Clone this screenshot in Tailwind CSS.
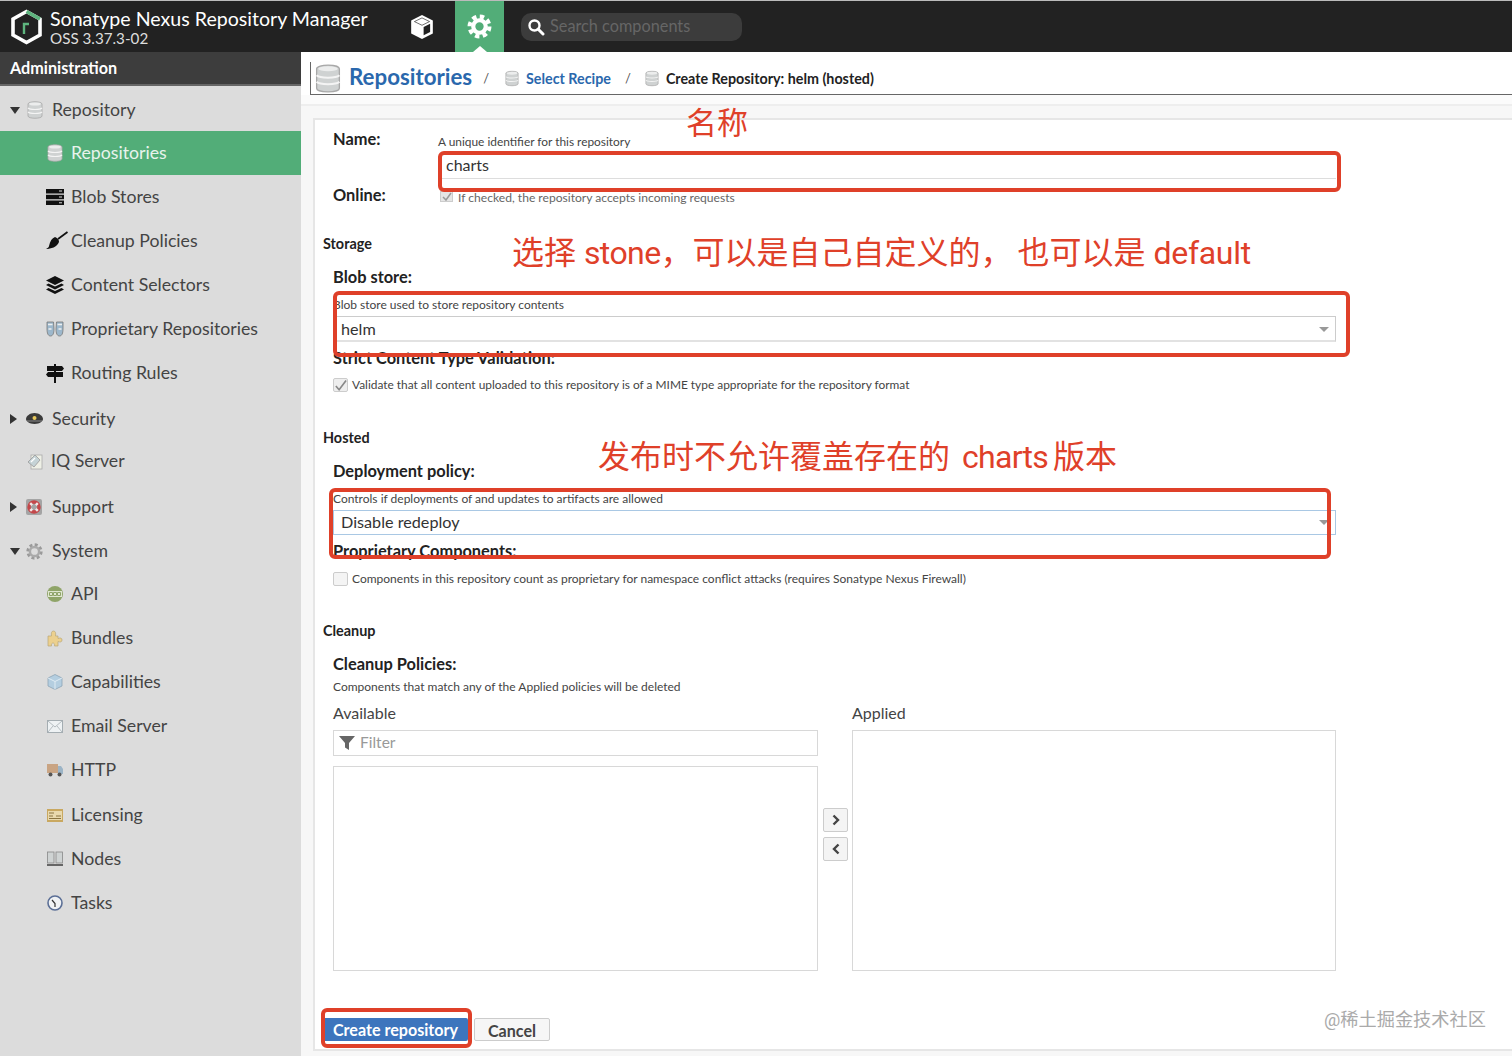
<!DOCTYPE html>
<html lang="en">
<head>
  <meta charset="UTF-8" />
  <title>Create Repository - Nexus Repository Manager</title>
  <script src="https://cdn.jsdelivr.net/npm/@tailwindcss/browser@4"></script>
</head>
<body class="w-[1512px] h-[1056px] overflow-hidden bg-white font-['Lato',sans-serif] text-[#333]">
  <svg class="hidden">
    <symbol id="db" viewBox="0 0 16 18">
      <path d="M1 3c0-3 14-3 14 0v12c0 3-14 3-14 0z" fill="#cfd2d2" stroke="#a8a8a8" stroke-width=".8"/>
      <path d="M1 7c2 2 12 2 14 0M1 11c2 2 12 2 14 0" fill="none" stroke="#f4f4f4" stroke-width="1.2"/>
      <ellipse cx="8" cy="3" rx="6" ry="1.6" fill="#eceded"/>
    </symbol>
  </svg>

  <!-- top bar -->
  <header class="h-[52px] bg-[#222] border-t border-[#bbb] flex items-center relative">
    <svg class="ml-[10px] w-[33px] h-[36px]" viewBox="0 0 33 36">
      <path d="M16.500 2.500 L30 10 V26 L16.500 33.500 L3 26 V10Z" fill="none" stroke="#fff" stroke-width="3.600"/>
      <path d="M16.500 2.500 L30 10" stroke="#5eb57e" stroke-width="3.600"/>
      <path d="M14 25v-10h5" fill="none" stroke="#5eb57e" stroke-width="2.400"/>
    </svg>
    <div class="ml-[7px] w-[362px] text-white">
      <div class="text-[19.600px] leading-[21px] h-[21px] whitespace-nowrap">Sonatype Nexus Repository Manager</div>
      <div class="mt-[1px] text-[15.200px] leading-[16px] text-[#ddd]">OSS 3.37.3-02</div>
    </div>
    <svg class="ml-[-3px] w-[26px] h-[26px]" viewBox="0 0 24 24">
      <path d="M12 1 L22 6 V18 L12 23 L2 18 V6Z" fill="#fff"/>
      <path d="M13.500 12 L19.500 9 V16.500 L13.500 19.500Z" fill="#222"/>
      <path d="M5 7 L12 3.600 L19 7 L12 10.400Z" fill="#fff" stroke="#222" stroke-width=".6"/>
    </svg>
    <div class="ml-[20px] w-[49px] h-[51px] bg-[#52ad78] relative flex items-center justify-center">
      <svg class="w-[25px] h-[25px]" viewBox="0 0 24 24">
        <circle cx="12" cy="12" r="9.500" fill="none" stroke="#fff" stroke-width="4" stroke-dasharray="4.200 3.260"/>
        <circle cx="12" cy="12" r="6" fill="none" stroke="#fff" stroke-width="4"/>
      </svg>
      <div class="absolute bottom-0 left-[18px] w-0 h-0 border-x-[7px] border-x-transparent border-b-[6px] border-b-white"></div>
    </div>
    <div class="ml-[17px] w-[221px] h-[28px] rounded-[10px] bg-[#3c3c3c] flex items-center pl-[6px]">
      <svg class="w-[18px] h-[18px]" viewBox="0 0 18 18">
        <circle cx="7.500" cy="7.500" r="5" fill="none" stroke="#fff" stroke-width="2.400"/>
        <path d="M11 11l5 5" stroke="#fff" stroke-width="3" stroke-linecap="round"/>
      </svg>
      <span class="ml-[5px] text-[16.300px] text-[#666]">Search components</span>
    </div>
  </header>

  <div class="flex h-[1004px]">
    <!-- sidebar -->
    <aside class="w-[301px] shrink-0 bg-[#dcdcdc] text-[17.700px] text-[#444]">
      <div class="h-[34px] bg-[#3d3d3d] border-b-2 border-[#666] pl-[10px] leading-[32px] text-[16.200px] font-bold text-white">Administration</div>

      <div class="h-[45px] pt-[3px] flex items-center pl-[10px]">
        <span class="w-0 h-0 border-x-[5px] border-x-transparent border-t-[7px] border-t-[#333]"></span>
        <svg class="ml-[7px] w-[16px] h-[18px]"><use href="#db"/></svg>
        <span class="ml-[9px]">Repository</span>
      </div>
      <div class="h-[44px] flex items-center pl-[47px] bg-[#52ad78] text-[#e8f3ec]">
        <svg class="w-[16px] h-[18px]"><use href="#db"/></svg>
        <span class="ml-[8px]">Repositories</span>
      </div>
      <div class="h-[44px] flex items-center pl-[46px]">
        <svg class="w-[18px] h-[18px]" viewBox="0 0 18 18"><path d="M0 1h18v4.400H0zM0 6.800h18v4.400H0zM0 12.600h18V17H0z" fill="#111"/><path d="M13 3h3M13 9h3M13 14.800h3" stroke="#ddd"/></svg>
        <span class="ml-[7px]">Blob Stores</span>
      </div>
      <div class="h-[44px] flex items-center pl-[46px]">
        <svg class="w-[22px] h-[20px]" viewBox="0 0 22 20"><path d="M21.500 1 12 8" stroke="#111" stroke-width="1.800"/><path d="M9 6c3 1 4 3 4 5-2 5-8 7-13 7 2-1 3-2 3-3 1-5 3-8 6-9z" fill="#111"/></svg>
        <span class="ml-[3px]">Cleanup Policies</span>
      </div>
      <div class="h-[44px] flex items-center pl-[46px]">
        <svg class="w-[18px] h-[18px]" viewBox="0 0 18 18"><path d="M9 0 18 4.500 9 9 0 4.500Z" fill="#111"/><path d="M2.500 7.500 9 10.600 15.500 7.500 18 9 9 13.500 0 9ZM2.500 12 9 15.100 15.500 12 18 13.500 9 18 0 13.500Z" fill="#111"/></svg>
        <span class="ml-[7px]">Content Selectors</span>
      </div>
      <div class="h-[44px] flex items-center pl-[46px]">
        <svg class="w-[18px] h-[18px]" viewBox="0 0 18 18"><path d="M1 2h6.500l.5 7c0 4-1 7-3.500 7S1 13 1 9z" fill="#9db8cc" stroke="#777" stroke-width=".8"/><path d="M10.500 2H17v7c0 4-1 7-3.500 7S10 13 10 9z" fill="#9db8cc" stroke="#777" stroke-width=".8"/><path d="M2 4.500h4.500M11.500 4.500H16M2.500 9h3M12.500 9h3" stroke="#eee" stroke-width="1.600"/></svg>
        <span class="ml-[7px]">Proprietary Repositories</span>
      </div>
      <div class="h-[44px] flex items-center pl-[46px]">
        <svg class="w-[18px] h-[19px]" viewBox="0 0 18 19"><path d="M8 0h2v19H8z" fill="#111"/><path d="M1 2h15l2 2.500-2 2.500H1zM17 8H2l-2 2.500L2 13h15z" fill="#111"/></svg>
        <span class="ml-[7px]">Routing Rules</span>
      </div>

      <div class="h-[44px] mt-[2px] flex items-center pl-[10px]">
        <span class="w-0 h-0 border-y-[5px] border-y-transparent border-l-[7px] border-l-[#333]"></span>
        <svg class="ml-[9px] w-[17px] h-[14px]" viewBox="0 0 17 14"><path d="M0 7c0-3 4-6 8.500-6S17 4 17 7c0 2-3 5-8.500 5S0 9 0 7z" fill="#3a3a3a"/><path d="M1 9h15" stroke="#888" stroke-width="1"/><circle cx="8.500" cy="6" r="2" fill="#e8c95c"/></svg>
        <span class="ml-[9px]">Security</span>
      </div>
      <div class="h-[40px] flex items-center pl-[27px]">
        <svg class="w-[16px] h-[17px]" viewBox="0 0 16 17"><rect x="4" y="2" width="11" height="14" fill="#eef0e6" stroke="#aaa" stroke-width=".8"/><path d="M1 9 8 2l5 5-6 7z" fill="#c5d3d6" stroke="#999" stroke-width=".8"/><path d="M4 9l4-4" stroke="#fff" stroke-width="1.200"/></svg>
        <span class="ml-[8px]">IQ Server</span>
      </div>
      <div class="h-[44px] mt-[4px] flex items-center pl-[10px]">
        <span class="w-0 h-0 border-y-[5px] border-y-transparent border-l-[7px] border-l-[#333]"></span>
        <svg class="ml-[9px] w-[16px] h-[16px]" viewBox="0 0 16 16"><rect width="16" height="16" rx="2" fill="#a4a4a4"/><circle cx="8" cy="8" r="5" fill="none" stroke="#c4474a" stroke-width="3.400"/><path d="M4.200 4.200l2 2M11.800 4.200l-2 2M4.200 11.800l2-2M11.800 11.800l-2-2" stroke="#f2e8e8" stroke-width="2.400"/></svg>
        <span class="ml-[10px]">Support</span>
      </div>
      <div class="h-[44px] flex items-center pl-[10px]">
        <span class="w-0 h-0 border-x-[5px] border-x-transparent border-t-[7px] border-t-[#333]"></span>
        <svg class="ml-[6px] w-[17px] h-[17px]" viewBox="0 0 24 24"><circle cx="12" cy="12" r="9.500" fill="none" stroke="#9a9a9a" stroke-width="4" stroke-dasharray="4.200 3.260"/><circle cx="12" cy="12" r="6.500" fill="none" stroke="#aaa" stroke-width="3.500"/></svg>
        <span class="ml-[9px]">System</span>
      </div>
      <div class="h-[42px] flex items-center pl-[47px]">
        <svg class="w-[16px] h-[16px]" viewBox="0 0 16 16"><circle cx="8" cy="8" r="8" fill="#8fa468"/><rect x="1" y="5" width="14" height="6" fill="#dfe6d0"/><path d="M2.500 6.500h3v3h-3zM6.500 6.500h3v3h-3zM10.500 6.500h3v3h-3z" fill="none" stroke="#8fa468"/></svg>
        <span class="ml-[8px]">API</span>
      </div>
      <div class="h-[44px] mt-[1px] flex items-center pl-[47px]">
        <svg class="w-[16px] h-[17px]" viewBox="0 0 16 17"><path d="M1 6h3.500C4 3 4.500 1 6.500 1S9 3 8.500 6H11v2.500c2.500-1 4-.5 4 1.500s-1.500 2.500-4 1.500V16H7.500c.5-2-.5-3-1.500-3s-2 1-1.500 3H1z" fill="#ecd08e" stroke="#b9a878" stroke-width=".7"/></svg>
        <span class="ml-[8px]">Bundles</span>
      </div>
      <div class="h-[44px] flex items-center pl-[47px]">
        <svg class="w-[16px] h-[16px]" viewBox="0 0 16 16"><path d="M8 .5 15 4v8l-7 3.500L1 12V4Z" fill="#b4cee0" stroke="#8ea4b6" stroke-width=".8"/><path d="M1 4l7 3.500L15 4M8 7.500v8" fill="none" stroke="#e4eef5" stroke-width=".9"/></svg>
        <span class="ml-[8px]">Capabilities</span>
      </div>
      <div class="h-[44px] flex items-center pl-[47px]">
        <svg class="w-[16px] h-[13px]" viewBox="0 0 16 13"><rect x=".5" y=".5" width="15" height="12" fill="#eef2f4" stroke="#a4adb2"/><path d="M1 1l7 6 7-6M1 12l5-6M15 12l-5-6" fill="none" stroke="#a4adb2" stroke-width=".8"/></svg>
        <span class="ml-[8px]">Email Server</span>
      </div>
      <div class="h-[44px] flex items-center pl-[47px]">
        <svg class="w-[16px] h-[14px]" viewBox="0 0 16 14"><rect y="1" width="11" height="9" fill="#c9a483"/><path d="M11 3h3l2 3v5h-5z" fill="#9cb4c6"/><circle cx="3.500" cy="11.500" r="2" fill="#555"/><circle cx="12.500" cy="11.500" r="2" fill="#555"/></svg>
        <span class="ml-[8px]">HTTP</span>
      </div>
      <div class="h-[44px] mt-[1px] flex items-center pl-[47px]">
        <svg class="w-[16px] h-[13px]" viewBox="0 0 16 13"><rect width="16" height="13" fill="#c9a860"/><rect x="1" y="2" width="14" height="9" fill="#e9d9ad"/><path d="M2 4h5M2 7h4M9 7h5M2 9.500h12" stroke="#8a7440"/></svg>
        <span class="ml-[8px]">Licensing</span>
      </div>
      <div class="h-[44px] flex items-center pl-[47px]">
        <svg class="w-[16px] h-[16px]" viewBox="0 0 16 16"><rect x=".5" y="1" width="6.500" height="11" fill="#cfd3d3" stroke="#888" stroke-width=".8"/><rect x="9" y="1" width="6.500" height="11" fill="#cfd3d3" stroke="#888" stroke-width=".8"/><path d="M0 14h16" stroke="#666" stroke-width="2"/></svg>
        <span class="ml-[8px]">Nodes</span>
      </div>
      <div class="h-[44px] flex items-center pl-[47px]">
        <svg class="w-[16px] h-[16px]" viewBox="0 0 16 16"><circle cx="8" cy="8" r="7" fill="#f0f2f4" stroke="#5b6f96" stroke-width="1.600"/><path d="M5 5l3 3.500V12" fill="none" stroke="#333" stroke-width="1.200"/></svg>
        <span class="ml-[8px]">Tasks</span>
      </div>
    </aside>

    <!-- main -->
    <main class="flex-1 relative bg-[#f7f7f7]">
      <div class="h-[43px] bg-white pl-[9px] pt-[10px]">
        <div class="h-[33px] border-l border-b border-[#666] pl-[4px] flex items-center">
          <svg class="w-[26px] h-[31px]"><use href="#db"/></svg>
          <span class="ml-[8px] text-[22.300px] font-bold text-[#2a68ad] leading-[30px] mb-[2px]">Repositories</span>
          <span class="ml-[11px] mt-[1px] text-[13px] text-[#555]">/</span>
          <svg class="ml-[16px] w-[14px] h-[17px]"><use href="#db"/></svg>
          <span class="ml-[7px] mt-[2px] text-[14.300px] font-bold text-[#2a68ad]">Select Recipe</span>
          <span class="ml-[14px] mt-[1px] text-[13px] text-[#555]">/</span>
          <svg class="ml-[14px] w-[14px] h-[17px]"><use href="#db"/></svg>
          <span class="ml-[7px] mt-[2px] text-[14.300px] font-bold text-[#222]">Create Repository: helm (hosted)</span>
        </div>
      </div>
      <div class="h-[9px] bg-[#fbfbfb]"></div>
      <div class="h-[2px] bg-[#eee]"></div>
      <div class="h-[12px]"></div>

      <!-- form panel -->
      <div class="ml-[12px] h-[933px] bg-white border-l-2 border-t-2 border-b-2 border-[#e6e6e6] pt-[11px] pl-[18px] text-[12px] text-[#444]">
        <div class="h-[20px] flex items-start">
          <label class="w-[105px] text-[16.400px] leading-[16px] font-bold text-[#222]">Name:</label>
          <span class="leading-[21px] text-[11.900px]">A unique identifier for this repository</span>
        </div>
        <div class="ml-[105px] w-[898px] h-[27px] mt-[1px] border-b border-[#ddd] pl-[8px] text-[16px] leading-[26px] text-[#333]">charts</div>

        <div class="mt-[9px] h-[18px] flex items-start">
          <label class="w-[107px] text-[16.400px] leading-[14px] font-bold text-[#222]">Online:</label>
          <span class="mt-[3px] w-[13px] h-[11px] bg-[#e5e5e5] border border-[#ccc] flex items-center justify-center">
            <svg class="w-[10px] h-[9px]" viewBox="0 0 10 9"><path d="M1 5l3 3 5-7" fill="none" stroke="#999" stroke-width="1.500"/></svg>
          </span>
          <span class="ml-[5px] leading-[19px] text-[12.100px] text-[#666]">If checked, the repository accepts incoming requests</span>
        </div>

        <div class="mt-[31px] -ml-[10px] h-[16px] leading-[14px] text-[14.400px] font-bold text-[#222]">Storage</div>
        <div class="mt-[17px] h-[16px] leading-[14px] text-[16.400px] font-bold text-[#222]">Blob store:</div>
        <div class="mt-[12px] h-[16px] leading-[14px]">Blob store used to store repository contents</div>
        <div class="mt-[2px] w-[1003px] h-[26px] border border-[#ccc] border-b-2 border-b-[#e2e2e2] pt-[2px] pl-[7px] pr-[6px] flex items-center justify-between text-[16.200px] text-[#333]">
          helm
          <span class="w-0 h-0 border-x-[5px] border-x-transparent border-t-[5px] border-t-[#999]"></span>
        </div>
        <div class="mt-[9px] h-[16px] leading-[14px] text-[16.400px] font-bold text-[#222]">Strict Content Type Validation:</div>
        <div class="mt-[11px] h-[16px] pb-[2px] flex items-center">
          <span class="w-[15px] h-[14px] bg-[#eee] border border-[#ccc] rounded-[2px] flex items-center justify-center">
            <svg class="w-[14px] h-[13px]" viewBox="0 0 14 13"><path d="M2 7l3.500 4L13 1" fill="none" stroke="#888" stroke-width="1.800"/></svg>
          </span>
          <span class="ml-[4px] text-[11.900px]">Validate that all content uploaded to this repository is of a MIME type appropriate for the repository format</span>
        </div>

        <div class="mt-[37px] -ml-[10px] h-[16px] leading-[14px] text-[14.400px] font-bold text-[#222]">Hosted</div>
        <div class="mt-[17px] h-[16px] leading-[14px] text-[16.400px] font-bold text-[#222]">Deployment policy:</div>
        <div class="mt-[12px] h-[16px] leading-[14px]">Controls if deployments of and updates to artifacts are allowed</div>
        <div class="mt-[2px] w-[1003px] h-[25px] border border-[#a9c8e4] pl-[7px] pr-[6px] flex items-center justify-between text-[16.200px] text-[#333]">
          Disable redeploy
          <span class="w-0 h-0 border-x-[5px] border-x-transparent border-t-[5px] border-t-[#999]"></span>
        </div>
        <div class="mt-[9px] h-[16px] leading-[14px] text-[16.400px] font-bold text-[#222]">Proprietary Components:</div>
        <div class="mt-[12px] h-[16px] pb-[2px] flex items-center">
          <span class="w-[15px] h-[14px] bg-[#f4f4f4] border border-[#ccc] rounded-[2px]"></span>
          <span class="ml-[4px]">Components in this repository count as proprietary for namespace conflict attacks (requires Sonatype Nexus Firewall)</span>
        </div>

        <div class="mt-[36px] -ml-[10px] h-[16px] leading-[14px] text-[14.400px] font-bold text-[#222]">Cleanup</div>
        <div class="mt-[17px] h-[16px] leading-[14px] text-[16.400px] font-bold text-[#222]">Cleanup Policies:</div>
        <div class="mt-[7px] h-[16px] leading-[14px]">Components that match any of the Applied policies will be deleted</div>

        <div class="mt-[10px] flex">
          <div class="w-[485px]">
            <div class="h-[16px] leading-[14px] text-[16px] text-[#444]">Available</div>
            <div class="mt-[8px] h-[26px] border border-[#d8d8d8] flex items-center pl-[5px] text-[15.500px] text-[#999]">
              <svg class="w-[16px] h-[16px]" viewBox="0 0 16 16"><path d="M0 1h16L10 8v7l-4-2.500V8z" fill="#666"/></svg>
              <span class="ml-[5px]">Filter</span>
            </div>
            <div class="mt-[10px] h-[205px] border border-[#d8d8d8]"></div>
          </div>
          <div class="w-[34px] pl-[5px] pt-[102px]">
            <div class="w-[25px] h-[24px] rounded-[2px] border border-[#ccc] bg-[#f4f4f4] flex items-center justify-center">
              <svg class="w-[10px] h-[12px]" viewBox="0 0 10 12"><path d="M2.500 1.500 7 6l-4.500 4.500" fill="none" stroke="#444" stroke-width="2.400"/></svg>
            </div>
            <div class="mt-[5px] w-[25px] h-[24px] rounded-[2px] border border-[#ccc] bg-[#f4f4f4] flex items-center justify-center">
              <svg class="w-[10px] h-[12px]" viewBox="0 0 10 12"><path d="M7.500 1.500 3 6l4.500 4.500" fill="none" stroke="#444" stroke-width="2.400"/></svg>
            </div>
          </div>
          <div class="w-[484px]">
            <div class="h-[16px] leading-[14px] text-[16px] text-[#444]">Applied</div>
            <div class="mt-[8px] h-[241px] border border-[#d8d8d8]"></div>
          </div>
        </div>

        <div class="mt-[47px] -ml-[10px] flex">
          <button class="w-[145px] h-[23px] pb-[1px] rounded-[2px] bg-[#3d75bd] text-white text-[16.100px] font-bold">Create repository</button>
          <button class="ml-[6px] w-[76px] h-[23px] pb-[2px] rounded-[2px] bg-[#f6f6f6] border border-[#ccc] text-[#444] text-[16.100px] font-bold">Cancel</button>
        </div>
      </div>

      <!-- annotations drawn over the screenshot -->
      <div class="absolute left-[137px] top-[99px] w-[903px] h-[41px] border-4 border-[#df4029] rounded-[6px]"></div>
      <div class="absolute left-[32px] top-[239px] w-[1017px] h-[66px] border-4 border-[#df4029] rounded-[6px]"></div>
      <div class="absolute left-[28px] top-[436px] w-[1002px] h-[71px] border-4 border-[#df4029] rounded-[6px]"></div>
      <div class="absolute left-[20px] top-[956px] w-[151px] h-[40px] border-4 border-[#df4029] rounded-[6px]"></div>
      <div class="absolute left-[385px] top-[50px] text-[31px] leading-[44px] text-[#df4029] font-['Roboto','Noto_Sans_CJK_SC',sans-serif]">名称</div>
      <div class="absolute left-[211px] top-[179px] text-[32px] leading-[44px] text-[#df4029] whitespace-nowrap font-['Roboto','Noto_Sans_CJK_SC',sans-serif]">选择 <span class="tracking-[-0.600px]">stone</span>，可以是自己自定义的，<span class="ml-[5px]">也可以是</span> <span class="tracking-[-0.300px]">default</span></div>
      <div class="absolute left-[297px] top-[383px] text-[32px] leading-[44px] text-[#df4029] whitespace-nowrap font-['Roboto','Noto_Sans_CJK_SC',sans-serif]">发布时不允许覆盖存在的 <span class="ml-[4px] -mr-[3px] tracking-[-0.700px]">charts</span> 版本</div>
      <div class="absolute left-[1023px] top-[954px] text-[18.200px] leading-[28px] text-[#aaa] whitespace-nowrap font-['Roboto','Noto_Sans_CJK_SC',sans-serif]">@稀土掘金技术社区</div>
    </main>
  </div>
</body>
</html>
